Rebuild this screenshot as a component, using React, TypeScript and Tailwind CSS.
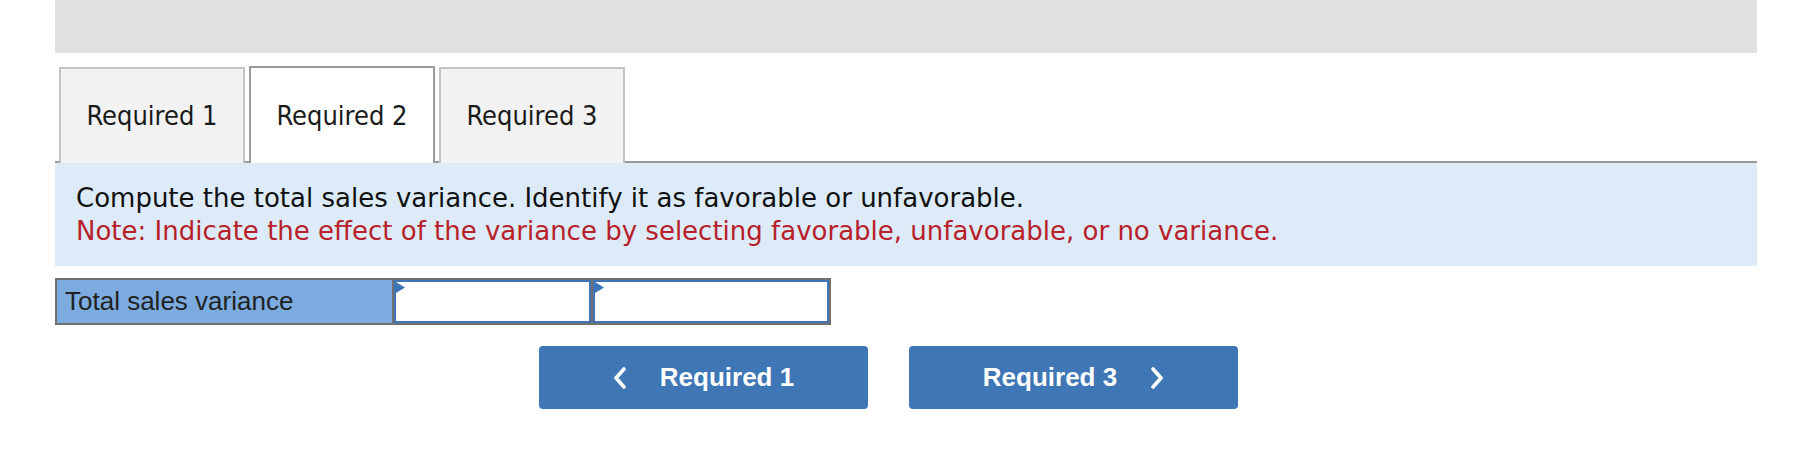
import React from "react";

const tabFont = { fontFamily: "'DejaVu Sans Condensed', 'DejaVu Sans', Verdana, sans-serif" };
const bodyFont = { fontFamily: "'DejaVu Sans', Verdana, sans-serif" };

function Flag() {
  return (
    <svg className="absolute left-0 top-0" width="9" height="11" viewBox="0 0 9 11">
      <polygon points="0,0 9,5.5 0,11" fill="#3f75b8" />
    </svg>
  );
}

export default function App() {
  return (
    <div className="w-[1802px] h-[460px] bg-white">
      <div className="ml-[55px] w-[1702px]">
        <div className="h-[53px] bg-[#e0e0e0]" />
        <div className="mt-[14px] flex gap-[4px] pl-[4px] border-b-2 border-[#999999] h-[96px] items-end" style={tabFont}>
          <div className="-mb-[2px] w-[186px] h-[96px] bg-[#f2f2f2] border-2 border-[#c4c4c4] border-b-0 flex items-center justify-center text-[27px] text-[#1a1a1a]">
            Required 1
          </div>
          <div className="-mb-[2px] w-[186px] h-[97px] bg-white border-2 border-[#999999] border-b-0 flex items-center justify-center text-[27px] text-[#1a1a1a] pt-[2px]">
            Required 2
          </div>
          <div className="-mb-[2px] w-[186px] h-[96px] bg-[#f2f2f2] border-2 border-[#c4c4c4] border-b-0 flex items-center justify-center text-[27px] text-[#1a1a1a]">
            Required 3
          </div>
        </div>
        <div className="h-[103px] bg-[#dcebf7] px-[21px] pt-[19px] text-[26px] leading-[33px]" style={bodyFont}>
          <div className="text-[#111111]">Compute the total sales variance. Identify it as favorable or unfavorable.</div>
          <div className="text-[#b8202a]">Note: Indicate the effect of the variance by selecting favorable, unfavorable, or no variance.</div>
        </div>
        <div className="mt-[12px] flex w-[776px] h-[47px] border-2 border-[#707070] bg-[#707070] gap-[2px]" style={{ fontFamily: "'Liberation Sans', Arial, sans-serif" }}>
          <div className="w-[335px] bg-[#7babdf] flex items-center pl-[8px] text-[26px] text-[#222222]">Total sales variance</div>
          <div className="relative w-[197px] bg-white border-2 border-[#3f75b8]">
            <Flag />
          </div>
          <div className="relative flex-1 bg-white border-2 border-[#3f75b8]">
            <Flag />
          </div>
        </div>
        <div className="mt-[21px] ml-[484px] flex gap-[41px]" style={{ fontFamily: "'Liberation Sans', Arial, sans-serif" }}>
          <button className="w-[329px] h-[63px] rounded-[4px] bg-[#3e76b6] text-white font-bold text-[26px] flex items-center justify-center gap-[33px]">
            <svg width="14" height="22" viewBox="0 0 14 22">
              <polyline points="11,2 3,11 11,20" fill="none" stroke="white" strokeWidth="3.6" strokeLinecap="round" strokeLinejoin="round" />
            </svg>
            <span>Required 1</span>
          </button>
          <button className="w-[329px] h-[63px] rounded-[4px] bg-[#3e76b6] text-white font-bold text-[26px] flex items-center justify-center gap-[33px]">
            <span>Required 3</span>
            <svg width="14" height="22" viewBox="0 0 14 22">
              <polyline points="3,2 11,11 3,20" fill="none" stroke="white" strokeWidth="3.6" strokeLinecap="round" strokeLinejoin="round" />
            </svg>
          </button>
        </div>
      </div>
    </div>
  );
}
